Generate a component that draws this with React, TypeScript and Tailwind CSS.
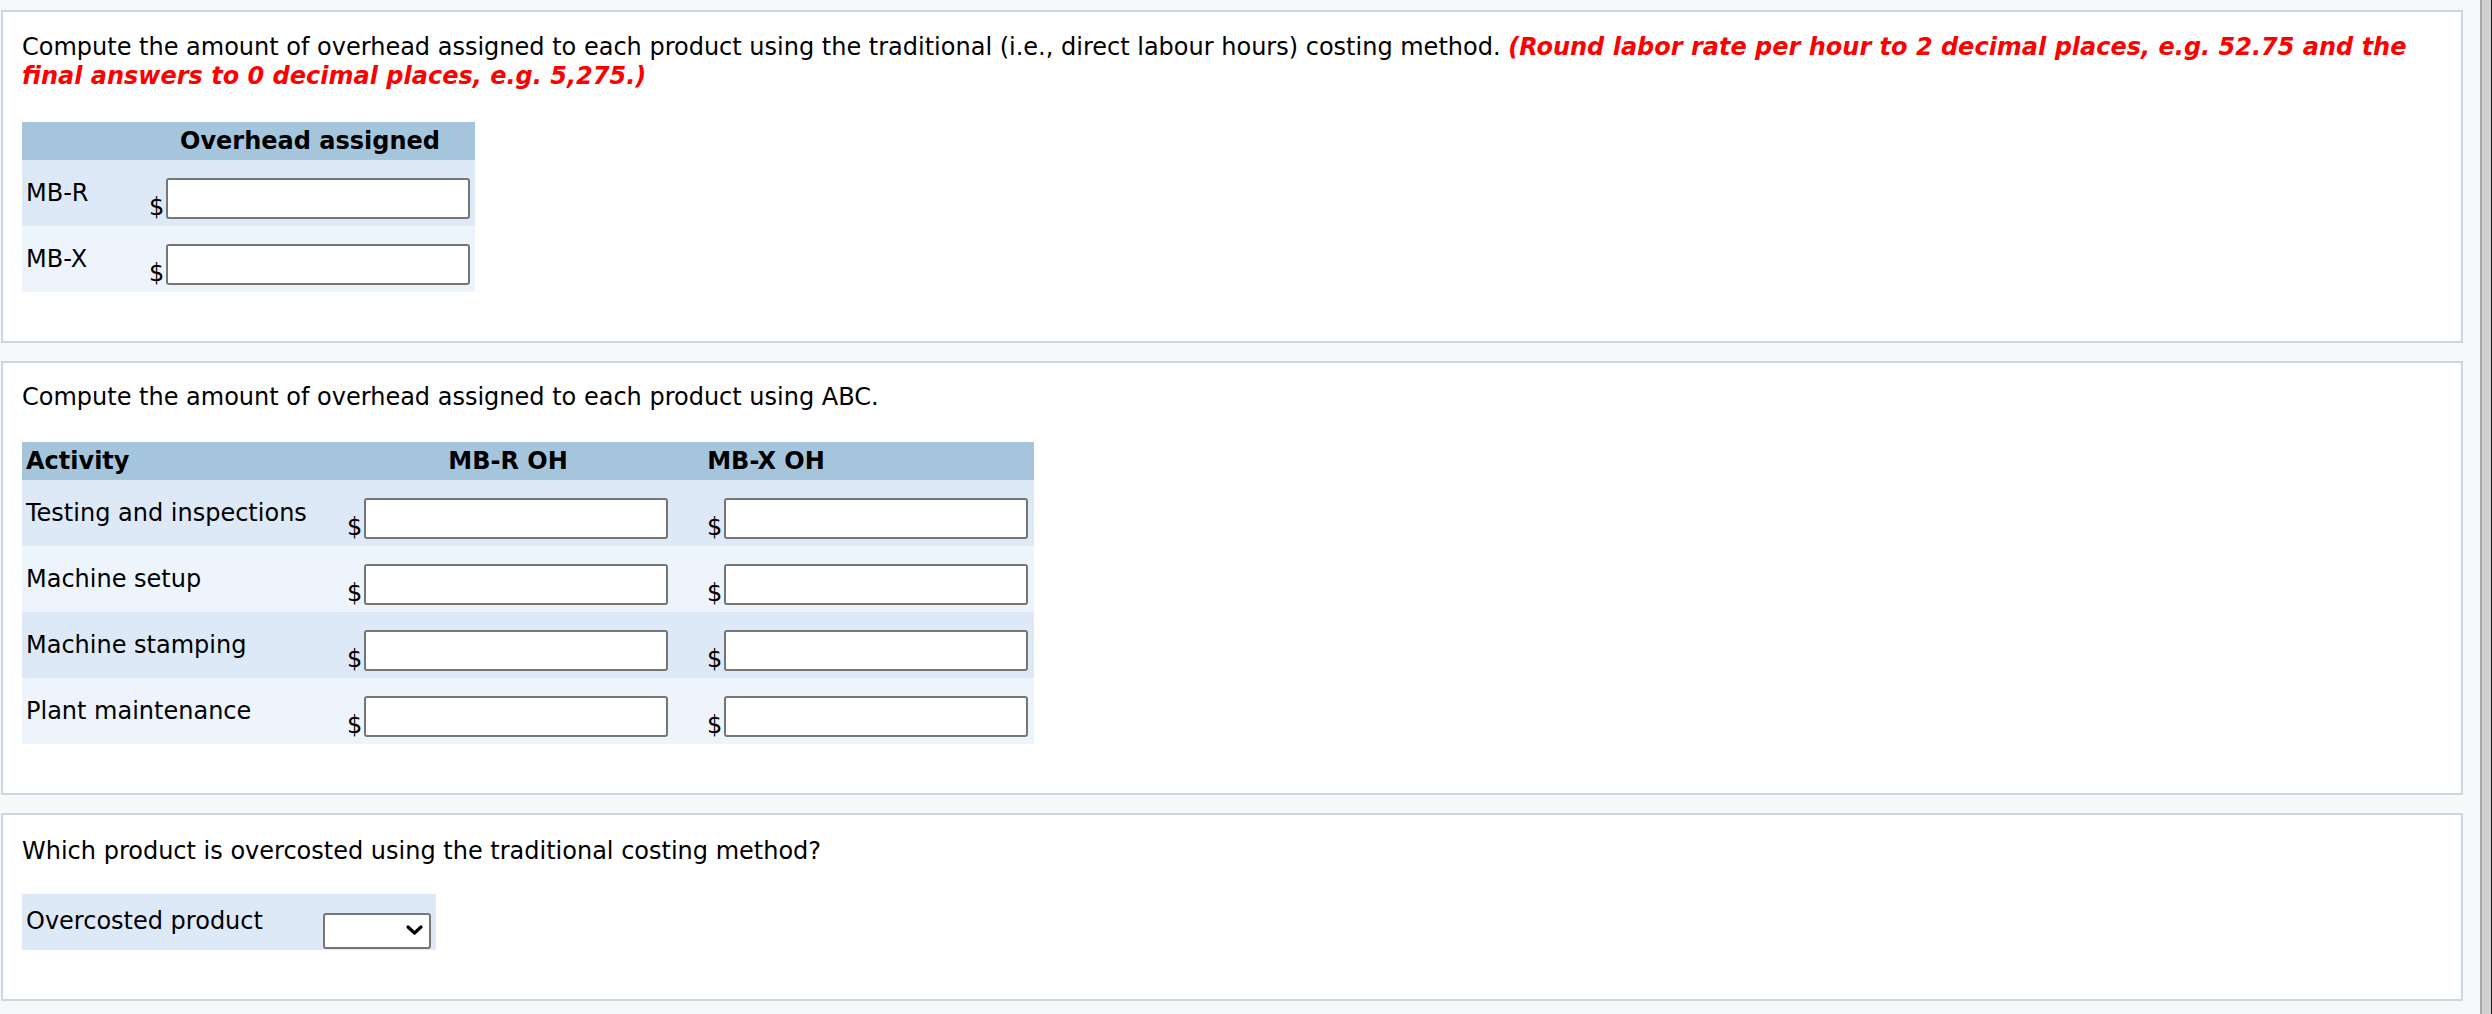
import React from "react";

const ROW_ODD = "bg-[#dde9f6]";
const ROW_EVEN = "bg-[#edf4fc]";

function MoneyInput() {
  return (
    <div className="flex items-end">
      <span className="w-[15px] leading-[23px]">$</span>
      <input
        type="text"
        className="ml-[2px] h-[41px] w-[304px] rounded-[3px] border-2 border-[#767676] bg-white px-2 outline-none"
      />
    </div>
  );
}

function Panel({ className, children }: { className: string; children: React.ReactNode }) {
  return (
    <div className={`border-2 border-[#cdd5e1] bg-white pl-[19px] pr-[19px] ${className}`}>
      {children}
    </div>
  );
}

const traditionalRows = ["MB-R", "MB-X"];
const activities = [
  "Testing and inspections",
  "Machine setup",
  "Machine stamping",
  "Plant maintenance",
];

export default function App() {
  return (
    <div className="flex h-[1014px] w-full overflow-hidden bg-[#f7f8fa] font-['DejaVu_Sans','Verdana',sans-serif] text-[24px] leading-[29px] text-black">
      <div className="flex min-w-0 flex-1 flex-col gap-[18px] pl-[1px] pr-[17px] pt-[10px]">
        {/* Traditional costing */}
        <Panel className="pt-[21px] pb-[49px]">
          <p>
            Compute the amount of overhead assigned to each product using the traditional (i.e.,
            direct labour hours) costing method.{" "}
            <span className="font-bold italic text-[#ff0000]">
              (Round labor rate per hour to 2 decimal places, e.g. 52.75 and the final answers to 0
              decimal places, e.g. 5,275.)
            </span>
          </p>

          <div className="mt-[31px] w-[453px]">
            <div className="flex h-[38px] items-center bg-[#a4c5dc] font-bold">
              <div className="w-[123px]" />
              <div className="flex-1 text-center">Overhead assigned</div>
            </div>
            {traditionalRows.map((label, i) => (
              <div
                key={label}
                className={`flex h-[66px] pb-[7px] ${i % 2 === 0 ? ROW_ODD : ROW_EVEN}`}
              >
                <div className="flex w-[127px] items-center pl-[4px] pt-[7px]">{label}</div>
                <MoneyInput />
              </div>
            ))}
          </div>
        </Panel>

        {/* ABC */}
        <Panel className="pt-[20px] pb-[49px]">
          <p>Compute the amount of overhead assigned to each product using ABC.</p>

          <div className="mt-[30px] w-[1012px]">
            <div className="flex h-[38px] items-center bg-[#a4c5dc] font-bold">
              <div className="w-[318px] pl-[4px]">Activity</div>
              <div className="w-[336px] text-center">MB-R OH</div>
              <div className="w-[180px] text-center">MB-X OH</div>
            </div>
            {activities.map((label, i) => (
              <div
                key={label}
                className={`flex h-[66px] pb-[7px] ${i % 2 === 0 ? ROW_ODD : ROW_EVEN}`}
              >
                <div className="flex w-[325px] items-center pl-[4px] pt-[7px]">{label}</div>
                <MoneyInput />
                <div className="w-[39px]" />
                <MoneyInput />
              </div>
            ))}
          </div>
        </Panel>

        {/* Overcosted */}
        <Panel className="pt-[22px] pb-[49px]">
          <p>Which product is overcosted using the traditional costing method?</p>

          <div className={`mt-[28px] flex h-[56px] w-[414px] items-end pb-[1px] ${ROW_ODD}`}>
            <div className="w-[301px] self-center pl-[4px]">Overcosted product</div>
            <div className="relative h-[36px] w-[108px]">
              <select className="h-full w-full appearance-none rounded-[3px] border-2 border-[#767676] bg-white outline-none">
                <option value=""></option>
                <option value="MB-R">MB-R</option>
                <option value="MB-X">MB-X</option>
              </select>
              <svg
                className="pointer-events-none absolute right-[8px] top-[12px]"
                width="17"
                height="10"
                viewBox="0 0 17 10"
              >
                <path
                  d="M2 2 L8.5 8 L15 2"
                  fill="none"
                  stroke="#000"
                  strokeWidth="3.2"
                  strokeLinecap="round"
                  strokeLinejoin="round"
                />
              </svg>
            </div>
          </div>
        </Panel>
      </div>

      {/* scrollbar track */}
      <div className="flex w-[12px]">
        <div className="w-[2px] bg-[#a8a8a8]" />
        <div className="flex-1 bg-[#d0d0d0]" />
        <div className="w-[1px] bg-[#1a1a1a]" />
      </div>
    </div>
  );
}
